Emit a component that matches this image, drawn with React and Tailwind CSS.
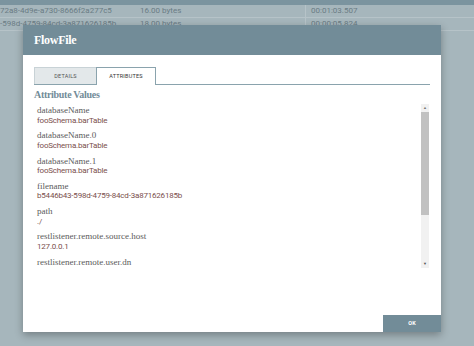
const attrs = [
  ["databaseName", "fooSchema.barTable"],
  ["databaseName.0", "fooSchema.barTable"],
  ["databaseName.1", "fooSchema.barTable"],
  ["filename", "b5446b43-598d-4759-84cd-3a871626185b"],
  ["path", "./"],
  ["restlistener.remote.source.host", "127.0.0.1"],
  ["restlistener.remote.user.dn", ""],
];

const App = () => {
  return (
    <div className="relative w-[474px] h-[346px] overflow-hidden bg-[#a6b6bc] font-['Roboto',sans-serif]">
      <div className="h-[5px] bg-[#7b949f]" />
      <div className="flex h-[13px] items-center border-b border-[#b6c3c8] text-[8px] text-[#6a7c84]">
        <div className="w-[136px] whitespace-nowrap overflow-hidden">72a8-4d9e-a730-8666f2a277c5</div>
        <div className="w-[169px] pl-[4px]">16.00 bytes</div>
        <div className="border-l border-[#b6c3c8] pl-[5px]">00:01:03.507</div>
      </div>
      <div className="flex h-[13px] items-center border-b border-[#b6c3c8] text-[8px] text-[#6a7c84]">
        <div className="w-[136px] whitespace-nowrap overflow-hidden">-598d-4759-84cd-3a871626185b</div>
        <div className="w-[169px] pl-[4px]">18.00 bytes</div>
        <div className="border-l border-[#b6c3c8] pl-[5px]">00:00:05.824</div>
      </div>

      <div className="absolute left-[23px] top-[25px] w-[418px] h-[307px] bg-white flex flex-col shadow-[0_3px_8px_rgba(0,0,0,0.3)]">
        <div className="h-[30px] bg-[#728c98] flex items-center pl-[11px]">
          <span className="text-white font-bold text-[12px] tracking-[-0.3px] font-['Liberation_Serif',serif]">FlowFile</span>
        </div>
        <div className="flex-1 relative pl-[11px] pr-[11px]">
          <div className="mt-[12px] flex h-[18px] border-b border-[#8aa3ad] w-[396px]">
            <div className="w-[62px] bg-[#e3e8ea] border-t border-l border-[#c8d2d6] flex items-center justify-center text-[5.5px] text-[#555] tracking-[0.2px]">DETAILS</div>
            <div className="w-[60px] bg-white border border-b-0 border-[#8aa3ad] -mb-[1px] flex items-center justify-center text-[5.5px] text-[#333] tracking-[0.2px]">ATTRIBUTES</div>
          </div>
          <div className="mt-[4px] leading-[12px] text-[10px] tracking-[-0.3px] font-bold text-[#728c98] font-['Liberation_Serif',serif]">Attribute Values</div>
          <div className="relative mt-[3px] h-[164px] overflow-hidden">
            <div className="pl-[3px] pt-[2px]">
              {attrs.map(([k, v]) => (
                <div key={k} className="h-[25.3px] leading-[9.5px]">
                  <div className="text-[9px] text-[#5a5a5a] font-['Liberation_Serif',serif]">{k}</div>
                  <div className="text-[8px] tracking-[-0.2px] text-[#7a4f4c]">{v}</div>
                </div>
              ))}
            </div>
            <div className="absolute right-[1px] top-[0px] w-[8px] h-[164px] bg-[#f1f1f1] flex flex-col">
              <div className="h-[8px] flex items-center justify-center text-[4px] text-[#777]">▲</div>
              <div className="h-[103px] bg-[#c1c1c1]" />
              <div className="flex-1" />
              <div className="h-[8px] flex items-center justify-center text-[4px] text-[#555]">▼</div>
            </div>
          </div>
        </div>
        <div className="h-[17px] flex justify-end">
          <div className="w-[58px] bg-[#728c98] flex items-center justify-center text-white text-[5.5px] font-bold">OK</div>
        </div>
      </div>
    </div>
  );
};

export default App;
